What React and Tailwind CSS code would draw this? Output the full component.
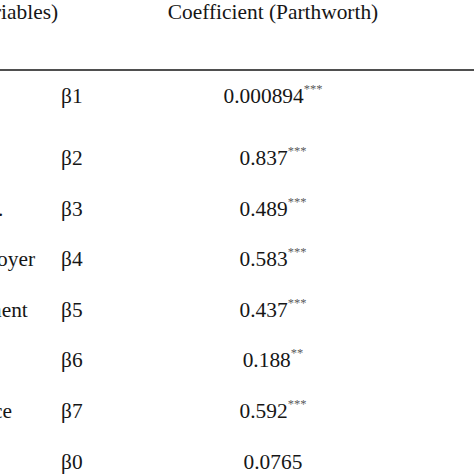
export default function App() {
  const rows = [
    { left: "", leftCls: "", b: "β1", v: "0.000894", s: "***", h: "h-[62px]" },
    { left: "", leftCls: "", b: "β2", v: "0.837", s: "***", h: "h-[50.6px]" },
    { left: ".", leftCls: "-ml-[2px]", b: "β3", v: "0.489", s: "***", h: "h-[50.6px]" },
    { left: "oyer", leftCls: "-ml-[3px]", b: "β4", v: "0.583", s: "***", h: "h-[50.6px]" },
    { left: "ment", leftCls: "-ml-[15px]", b: "β5", v: "0.437", s: "***", h: "h-[50.6px]" },
    { left: "", leftCls: "", b: "β6", v: "0.188", s: "**", h: "h-[50.6px]" },
    { left: "ce", leftCls: "-ml-[7px]", b: "β7", v: "0.592", s: "***", h: "h-[50.6px]" },
    { left: "", leftCls: "", b: "β0", v: "0.0765", s: "", h: "h-[50.6px]" },
  ];
  return (
    <div
      className="w-[474px] h-[474px] bg-white overflow-hidden text-[#161616] text-[21.4px] leading-[24px]"
      style={{ fontFamily: '"Liberation Serif", "Times New Roman", serif' }}
    >
      <div className="flex h-[71px] border-b-2 border-[#4f4f4f]">
        <div className="w-[100px] whitespace-nowrap">
          <span className="-ml-[6px] inline-block">riables)</span>
        </div>
        <div className="w-[346px] text-center whitespace-nowrap">Coefficient (Parthworth)</div>
      </div>
      <div className="pt-[13px]">
        {rows.map((r, i) => (
          <div key={i} className={`flex ${r.h}`}>
            <div className="w-[61px] whitespace-nowrap">
              {r.left && <span className={`inline-block ${r.leftCls}`}>{r.left}</span>}
            </div>
            <div className="w-[39px] whitespace-nowrap">{r.b}</div>
            <div className="w-[346px] text-center whitespace-nowrap">
              {r.v}
              {r.s && (
                <span className="text-[12.5px] leading-[0] align-[10px] text-[#5a5a5a]">{r.s}</span>
              )}
            </div>
          </div>
        ))}
      </div>
    </div>
  );
}
